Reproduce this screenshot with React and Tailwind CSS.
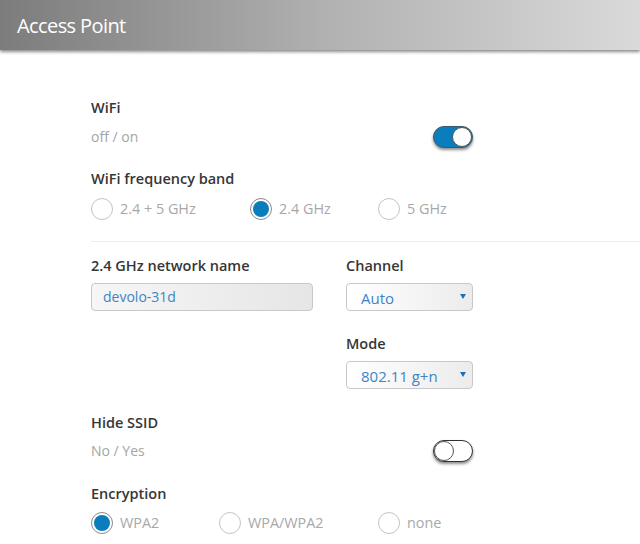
import React from "react";

function Toggle({ on }) {
  return (
    <div
      className={
        "relative w-[40px] h-[22px] rounded-full border shadow-[0_2px_3px_rgba(0,0,0,0.45)] " +
        (on ? "bg-[#0a7dbd] border-[#3a5a70]" : "bg-white border-[#333]")
      }
    >
      <div
        className={
          "absolute top-[0px] w-[20px] h-[20px] rounded-full bg-white border border-[#555] " +
          (on ? "right-[0px]" : "left-[0px]")
        }
      />
    </div>
  );
}

function Radio({ checked, label, width }) {
  return (
    <div className="flex items-center" style={{ width }}>
      {checked ? (
        <div className="w-[22px] h-[22px] rounded-full border border-[#8a8a8a] p-[2px] bg-white">
          <div className="w-full h-full rounded-full bg-[#0a7dbd]" />
        </div>
      ) : (
        <div className="w-[22px] h-[22px] rounded-full border border-[#c4c4c4] bg-white" />
      )}
      <span className="ml-[7px] text-[14.4px] text-[#a8a8a8] leading-[20px]">{label}</span>
    </div>
  );
}

function Select({ value }) {
  return (
    <div className="relative w-[127px] h-[28px] rounded-[4px] border border-[#c8c8c8] bg-gradient-to-r from-white to-[#ececec] flex items-center pl-[14px]">
      <span className="text-[15px] text-[#3d84c6] leading-[20px] pt-[2px]">{value}</span>
      <svg className="absolute right-[6px] top-[10px]" width="6" height="5" viewBox="0 0 6 5">
        <path d="M0 0 L6 0 L3 5 Z" fill="#1f6fb5" />
      </svg>
    </div>
  );
}

const labelCls = "text-[14.5px] font-semibold text-[#363636] leading-[20px]";

export default function App() {
  return (
    <div
      className="w-[640px] h-[544px] bg-white overflow-hidden"
      style={{ fontFamily: '"Open Sans", "Noto Sans", sans-serif' }}
    >
      <div className="h-[50px] bg-gradient-to-r from-[#7c7c7c] via-[#b0b0b0] to-[#dadada] flex items-center pl-[17px] shadow-[0_2px_3px_rgba(0,0,0,0.45)] relative">
        <span className="text-[20px] text-white leading-[24px] tracking-[-0.6px] pt-[2px]">Access Point</span>
      </div>

      <div className="pl-[91px] pt-[48px]">
        <div className="w-[382px]">
          <div className={labelCls}>WiFi</div>
          <div className="mt-[8px] flex items-center justify-between h-[22px]">
            <span className="text-[14px] text-[#a5a5a5] leading-[20px]">off / on</span>
            <Toggle on />
          </div>
          <div className={"mt-[21px] " + labelCls}>WiFi frequency band</div>
          <div className="mt-[9px] flex items-center h-[22px]">
            <Radio label="2.4 + 5 GHz" width={159} />
            <Radio checked label="2.4 GHz" width={128} />
            <Radio label="5 GHz" width={95} />
          </div>
        </div>

        <div className="mt-[21px] h-[1px] bg-[#ececec]" />

        <div className="w-[382px]">
          <div className="mt-[14px] flex">
            <div className="w-[255px]">
              <div className={labelCls}>2.4 GHz network name</div>
              <div className="mt-[7px] w-[222px] h-[28px] rounded-[4px] border border-[#c8c8c8] bg-gradient-to-r from-[#f6f6f6] to-[#e6e6e6] flex items-center pl-[11px]">
                <span className="text-[14px] text-[#3d84c6] leading-[20px]">devolo-31d</span>
              </div>
            </div>
            <div className="w-[127px]">
              <div className={labelCls}>Channel</div>
              <div className="mt-[7px]">
                <Select value="Auto" />
              </div>
              <div className={"mt-[23px] " + labelCls}>Mode</div>
              <div className="mt-[7px]">
                <Select value="802.11 g+n" />
              </div>
            </div>
          </div>

          <div className={"mt-[24px] " + labelCls}>Hide SSID</div>
          <div className="mt-[7px] flex items-center justify-between h-[22px]">
            <span className="text-[14px] text-[#a5a5a5] leading-[20px]">No / Yes</span>
            <Toggle on={false} />
          </div>
          <div className={"mt-[22px] " + labelCls}>Encryption</div>
          <div className="mt-[8px] flex items-center h-[22px]">
            <Radio checked label="WPA2" width={128} />
            <Radio label="WPA/WPA2" width={159} />
            <Radio label="none" width={95} />
          </div>
        </div>
      </div>
    </div>
  );
}
